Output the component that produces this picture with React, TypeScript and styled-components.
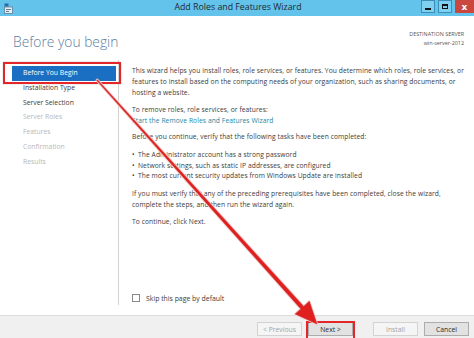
import React from "react";
import styled, { createGlobalStyle, css } from "styled-components";

const GlobalStyle = createGlobalStyle`
  html, body { margin: 0; padding: 0; background: #ffffff; }
  body { width: 474px; height: 338px; overflow: hidden; font-family: "Open Sans", "Noto Sans", sans-serif; }
  * { box-sizing: border-box; }
`;

const Window = styled.div`
  position: relative;
  width: 474px;
  height: 338px;
  display: flex;
  flex-direction: column;
  background: #ffffff;
  overflow: hidden;
`;

const TitleBar = styled.div`
  height: 16px;
  flex: 0 0 16px;
  background: #63c3ea;
  display: flex;
  align-items: flex-start;
  position: relative;
`;

const AppIcon = styled.div`
  width: 14px;
  height: 16px;
  display: flex;
  align-items: center;
  justify-content: flex-end;
`;

const Title = styled.div`
  position: absolute;
  left: 0;
  right: 0;
  top: 0;
  height: 15px;
  line-height: 15px;
  text-align: center;
  font-size: 8.8px;
  color: #1f2a33;
  padding-left: 2px;
`;

const Controls = styled.div`
  margin-left: auto;
  display: flex;
  align-items: flex-start;
  gap: 3px;
  position: relative;
  z-index: 1;
`;

const CapButton = styled.div<{ $close?: boolean }>`
  height: 13px;
  width: ${(p) => (p.$close ? "19px" : "14px")};
  display: flex;
  align-items: center;
  justify-content: center;
  ${(p) =>
    p.$close
      ? css`
          background: #c9473f;
          color: #fff;
          font-weight: bold;
          font-size: 9px;
          font-family: "DejaVu Sans", sans-serif;
        `
      : css`
          background: #7fd0f0;
          border: 1px solid #3b8fb7;
        `}
`;

const MinGlyph = styled.div`
  width: 6px;
  height: 2px;
  background: #111;
  margin-top: 4px;
`;

const MaxGlyph = styled.div`
  width: 6px;
  height: 5px;
  border: 1px solid #111;
  border-top-width: 2px;
`;

const Header = styled.div`
  height: 44px;
  flex: 0 0 44px;
  display: flex;
  justify-content: space-between;
  align-items: flex-start;
  padding: 17px 10px 0 13px;
`;

const Heading = styled.h1`
  margin: 0;
  font-size: 13.8px;
  line-height: 18px;
  font-weight: 300;
  color: #5a7d9f;
`;

const ServerInfo = styled.div`
  margin-top: -3px;
  text-align: right;
  font-size: 5.4px;
  line-height: 9px;
  color: #555;
`;

const Main = styled.div`
  flex: 1;
  display: flex;
  padding-bottom: 10px;
`;

const Nav = styled.nav`
  width: 119px;
  flex: 0 0 119px;
  border-right: 1px solid #d4d4d4;
  padding: 6px 2px 0 12px;
  display: flex;
  flex-direction: column;
`;

const NavItem = styled.div<{ $state: "active" | "done" | "off"; $annotated?: boolean }>`
  position: relative;
  height: 14.8px;
  line-height: 14.8px;
  padding-left: 11px;
  font-size: 6.8px;
  white-space: nowrap;
  color: ${(p) => (p.$state === "active" ? "#ffffff" : p.$state === "done" ? "#3a3a3a" : "#b8b8b8")};
  background: ${(p) => (p.$state === "active" ? "#1a6fc2" : "transparent")};
  ${(p) =>
    p.$annotated &&
    css`
      &::after {
        content: "";
        position: absolute;
        left: -9px;
        right: -5px;
        top: -4px;
        bottom: -3px;
        border: 2.5px solid #e2262a;
        box-shadow: 0 0 1px rgba(0, 0, 0, 0.4);
      }
    `}
`;

const Content = styled.div`
  flex: 1;
  min-width: 0;
  display: flex;
  flex-direction: column;
  padding: 4.5px 4px 2px 13px;
  font-size: 6.7px;
  letter-spacing: 0.08px;
  line-height: 11px;
  color: #3b3b3b;
  white-space: nowrap;
`;

const Block = styled.div<{ $gap: number }>`
  margin-bottom: ${(p) => p.$gap}px;
`;

const Link = styled.div`
  color: #2289a3;
`;

const Bullets = styled.ul`
  list-style: none;
  margin: 0;
  padding: 0;
`;

const Bullet = styled.li`
  display: flex;
  line-height: 10.5px;
  &::before {
    content: "•";
    width: 6px;
    color: #333;
  }
`;

const SkipRow = styled.label`
  margin-top: auto;
  height: 10px;
  display: flex;
  align-items: center;
  gap: 6px;
  font-size: 6.9px;
  letter-spacing: 0;
`;

const Check = styled.span`
  width: 8px;
  height: 8px;
  border: 1px solid #8a8a8a;
  background: #fff;
`;

const Footer = styled.div`
  height: 23px;
  flex: 0 0 23px;
  background: #f0f0f0;
  border-top: 1px solid #dcdcdc;
  display: flex;
  justify-content: flex-end;
  align-items: flex-start;
  padding: 6px 5px 0 0;
`;

const Button = styled.div<{ $disabled?: boolean; $annotated?: boolean; $space?: number }>`
  position: relative;
  width: 45px;
  height: 14px;
  margin-left: ${(p) => p.$space ?? 6}px;
  display: flex;
  align-items: center;
  justify-content: center;
  font-size: 6.8px;
  ${(p) =>
    p.$disabled
      ? css`
          background: #f5f5f5;
          border: 1px solid #d3d3d3;
          color: #a3a3a3;
        `
      : css`
          background: #e2e2e2;
          border: 1px solid #acacac;
          color: #2a2a2a;
        `}
  ${(p) =>
    p.$annotated &&
    css`
      &::after {
        content: "";
        position: absolute;
        left: -3px;
        right: -3px;
        top: -2px;
        bottom: -6px;
        border: 2.5px solid #e2262a;
      }
    `}
`;

const Overlay = styled.svg`
  position: absolute;
  left: 0;
  top: 0;
  width: 474px;
  height: 338px;
  pointer-events: none;
`;

function Arrow() {
  const x1 = 97, y1 = 80, x2 = 317, y2 = 324;
  const dx = x2 - x1, dy = y2 - y1;
  const len = Math.hypot(dx, dy);
  const ux = dx / len, uy = dy / len;
  const px = -uy, py = ux;
  const headLen = 22, headW = 9.5;
  const bx = x2 - ux * headLen, by = y2 - uy * headLen;
  const w0 = 0.5, w1 = 1.9;
  const pts = [
    [x1 + px * w0, y1 + py * w0],
    [bx + px * w1, by + py * w1],
    [bx + px * headW, by + py * headW],
    [x2, y2],
    [bx - px * headW, by - py * headW],
    [bx - px * w1, by - py * w1],
    [x1 - px * w0, y1 - py * w0],
  ]
    .map((p) => p.map((v) => v.toFixed(1)).join(","))
    .join(" ");
  return (
    <Overlay viewBox="0 0 474 338">
      <polygon points={pts} fill="#f1b5b5" stroke="#f6cccc" strokeWidth={2.2} strokeLinejoin="round" />
      <polygon points={pts} fill="#e0201e" stroke="#c8191a" strokeWidth={0.4} />
    </Overlay>
  );
}

export default function App() {
  return (
    <>
      <GlobalStyle />
      <Window>
        <TitleBar>
          <AppIcon>
            <svg width="10" height="11" viewBox="0 0 10 11">
              <rect x="0.5" y="0.5" width="4" height="3" fill="#2c6aa8" />
              <rect x="0.5" y="4" width="8" height="6.5" fill="#e8eef3" stroke="#5f7d96" strokeWidth="0.8" />
              <rect x="2" y="6" width="5" height="1" fill="#5f7d96" />
              <rect x="2" y="8" width="3" height="1" fill="#5f7d96" />
            </svg>
          </AppIcon>
          <Title>Add Roles and Features Wizard</Title>
          <Controls>
            <CapButton>
              <MinGlyph />
            </CapButton>
            <CapButton>
              <MaxGlyph />
            </CapButton>
            <CapButton $close>x</CapButton>
          </Controls>
        </TitleBar>
        <Header>
          <Heading>Before you begin</Heading>
          <ServerInfo>
            DESTINATION SERVER
            <br />
            win-server-2012
          </ServerInfo>
        </Header>
        <Main>
          <Nav>
            <NavItem $state="active" $annotated>Before You Begin</NavItem>
            <NavItem $state="done">Installation Type</NavItem>
            <NavItem $state="done">Server Selection</NavItem>
            <NavItem $state="off">Server Roles</NavItem>
            <NavItem $state="off">Features</NavItem>
            <NavItem $state="off">Confirmation</NavItem>
            <NavItem $state="off">Results</NavItem>
          </Nav>
          <Content>
            <Block $gap={6.5}>
              This wizard helps you install roles, role services, or features. You determine which roles, role services, or
              <br />
              features to install based on the computing needs of your organization, such as sharing documents, or
              <br />
              hosting a website.
            </Block>
            <Block $gap={5}>
              To remove roles, role services, or features:
              <Link>Start the Remove Roles and Features Wizard</Link>
            </Block>
            <Block $gap={8}>Before you continue, verify that the following tasks have been completed:</Block>
            <Block $gap={6.5}>
              <Bullets>
                <Bullet>The Administrator account has a strong password</Bullet>
                <Bullet>Network settings, such as static IP addresses, are configured</Bullet>
                <Bullet>The most current security updates from Windows Update are installed</Bullet>
              </Bullets>
            </Block>
            <Block $gap={6}>
              If you must verify that any of the preceding prerequisites have been completed, close the wizard,
              <br />
              complete the steps, and then run the wizard again.
            </Block>
            <Block $gap={0}>To continue, click Next.</Block>
            <SkipRow>
              <Check />
              Skip this page by default
            </SkipRow>
          </Content>
        </Main>
        <Footer>
          <Button $disabled>&lt; Previous</Button>
          <Button $annotated>Next &gt;</Button>
          <Button $disabled $space={20}>Install</Button>
          <Button>Cancel</Button>
        </Footer>
        <Arrow />
      </Window>
    </>
  );
}
